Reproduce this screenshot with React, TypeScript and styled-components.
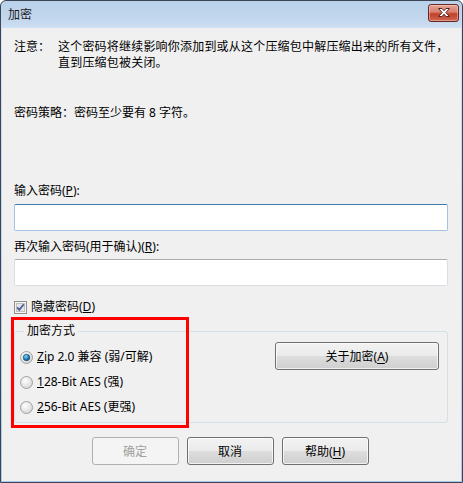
import styled, { createGlobalStyle } from 'styled-components';

const GlobalStyle = createGlobalStyle`
    html, body {
        margin: 0;
        padding: 0;
        background: #ffffff;
    }
    body {
        font-family: 'Noto Sans', 'Noto Sans CJK SC', sans-serif;
        font-size: 12px;
        color: #000;
    }
`;

const Window = styled.div`
    width: 463px;
    height: 483px;
    box-sizing: border-box;
    border: 1px solid #3b4553;
    border-radius: 6px 6px 0 0;
    background: linear-gradient(#b9d1ea 0px, #c4d8ee 20px, #cfe0f3 27px, #aac8e8 100%);
    display: flex;
    flex-direction: column;
    overflow: hidden;
`;

const TitleBar = styled.div`
    height: 27px;
    display: flex;
    align-items: center;
    justify-content: space-between;
    padding: 0 3px 0 7px;
    flex-shrink: 0;
`;

const Title = styled.span`
    font-size: 12px;
    color: #1a1a1a;
    line-height: 16px;
`;

const CloseButton = styled.div`
    width: 29px;
    height: 16px;
    margin-top: -4px;
    border: 1px solid #6b2420;
    border-radius: 3px;
    background: linear-gradient(#e6a394 0%, #d67f6f 45%, #c2402b 55%, #d0674f 100%);
    box-shadow: inset 0 0 0 1px rgba(255, 255, 255, 0.35);
    display: flex;
    align-items: center;
    justify-content: center;
`;

const Client = styled.div`
    flex: 1;
    margin: 0 1px 1px 1px;
    background: #f0f0f0;
    padding: 11px 12px 0 12px;
    display: flex;
    flex-direction: column;
`;

const NoteRow = styled.div`
    display: flex;
    line-height: 16px;

    > .head {
        width: 44px;
        flex-shrink: 0;
    }

    > .body {
        letter-spacing: 0.2px;
        white-space: nowrap;
    }
`;

const Policy = styled.div`
    line-height: 16px;
    margin-top: 34px;
`;

const Label = styled.div<{ $gap: number }>`
    line-height: 16px;
    margin-top: ${(p) => p.$gap}px;
`;

const TextBox = styled.input<{ $focused?: boolean }>`
    display: block;
    box-sizing: border-box;
    width: 434px;
    height: 27px;
    margin-top: ${(p) => (p.$focused ? 5 : 4)}px;
    border: 1px solid ${(p) => (p.$focused ? '#a4c3e0' : '#dadee3')};
    border-top-color: ${(p) => (p.$focused ? '#3d7bad' : '#abadb3')};
    border-radius: 2px;
    background: #fff;
    outline: none;
    padding: 0 4px;
`;

const CheckRow = styled.label`
    display: flex;
    align-items: center;
    gap: 4px;
    margin-top: 13px;
    line-height: 16px;
`;

const Group = styled.fieldset`
    position: relative;
    margin: 8px 1px 0 0;
    padding: 10px 8px 7px 5px;
    border: 1px solid #d5dfe5;
    border-radius: 3px;
    display: flex;
    justify-content: space-between;
    align-items: flex-start;

    > legend {
        padding: 0 3px;
        margin-left: 4px;
        line-height: 16px;
        color: #000;
    }
`;

const Annotation = styled.div`
    position: absolute;
    left: -4px;
    top: -22px;
    width: 172px;
    height: 105px;
    border: 3px solid #ff0000;
    pointer-events: none;
`;

const RadioList = styled.div`
    display: flex;
    flex-direction: column;
    gap: 9px;
`;

const RadioRow = styled.div`
    display: flex;
    align-items: center;
    gap: 4px;
    line-height: 16px;
`;

const Button = styled.button<{ $width: number; $disabled?: boolean }>`
    box-sizing: border-box;
    width: ${(p) => p.$width}px;
    height: 28px;
    padding: 0;
    font-family: inherit;
    font-size: 12px;
    border-radius: 3px;
    border: 1px solid ${(p) => (p.$disabled ? '#adb2b5' : '#707070')};
    color: ${(p) => (p.$disabled ? '#a0a0a0' : '#000')};
    background: ${(p) =>
        p.$disabled
            ? '#f4f4f4'
            : 'linear-gradient(#f2f2f2 0%, #ebebeb 48%, #dddddd 52%, #cfcfcf 100%)'};
    box-shadow: inset 0 0 0 1px ${(p) => (p.$disabled ? '#f4f4f4' : 'rgba(255,255,255,0.7)')};

    u {
        text-underline-offset: 2px;
    }
`;

const AboutArea = styled.div`
    margin-top: -7px;
`;

const ButtonRow = styled.div`
    display: flex;
    justify-content: center;
    gap: 8px;
    margin-top: 14px;
    margin-left: -3px;
`;

const CheckBoxIcon = () => (
    <svg width="13" height="13" viewBox="0 0 13 13">
        <rect x="0.5" y="0.5" width="12" height="12" fill="#f4f4f4" stroke="#8e8f8f" />
        <rect x="2.5" y="2.5" width="8" height="8" fill="#e4e4e4" stroke="#c0c0c0" />
        <path d="M3.2 6.4 L5.3 8.8 L9.8 3.2" fill="none" stroke="#4a5f97" strokeWidth="1.8" />
    </svg>
);

const RadioIcon = ({ checked }: { checked?: boolean }) => (
    <svg width="13" height="13" viewBox="0 0 13 13">
        <defs>
            <radialGradient id="rbg" cx="0.4" cy="0.35" r="0.7">
                <stop offset="0" stopColor="#ffffff" />
                <stop offset="1" stopColor="#d4d4d4" />
            </radialGradient>
            <radialGradient id="rdot" cx="0.4" cy="0.35" r="0.7">
                <stop offset="0" stopColor="#8ad8f8" />
                <stop offset="0.6" stopColor="#1c7fba" />
                <stop offset="1" stopColor="#0c3d63" />
            </radialGradient>
        </defs>
        <circle cx="6.5" cy="6.5" r="6" fill="url(#rbg)" stroke="#a0a0a0" />
        {checked && <circle cx="6.5" cy="6.5" r="3.3" fill="url(#rdot)" stroke="#1b4a6e" strokeWidth="0.6" />}
    </svg>
);

const CloseIcon = () => (
    <svg width="14" height="11" viewBox="0 0 14 11">
        <path
            d="M1.5 1.5 L5 1.5 L7 3.8 L9 1.5 L12.5 1.5 L8.8 5.5 L12.5 9.5 L9 9.5 L7 7.2 L5 9.5 L1.5 9.5 L5.2 5.5 Z"
            fill="#ffffff"
            stroke="#5a2a24"
            strokeWidth="1"
            strokeLinejoin="round"
        />
    </svg>
);

export default function App() {
    return (
        <>
            <GlobalStyle />
            <Window>
                <TitleBar>
                    <Title>加密</Title>
                    <CloseButton>
                        <CloseIcon />
                    </CloseButton>
                </TitleBar>
                <Client>
                    <NoteRow>
                        <span className="head">注意：</span>
                        <span className="body">
                            这个密码将继续影响你添加到或从这个压缩包中解压缩出来的所有文件，
                            <br />
                            直到压缩包被关闭。
                        </span>
                    </NoteRow>
                    <Policy>密码策略：密码至少要有 8 字符。</Policy>
                    <Label $gap={62}>
                        输入密码(<u>P</u>):
                    </Label>
                    <TextBox type="password" $focused />
                    <Label $gap={8}>
                        再次输入密码(用于确认)(<u>R</u>):
                    </Label>
                    <TextBox type="password" />
                    <CheckRow>
                        <CheckBoxIcon />
                        <span>
                            隐藏密码(<u>D</u>)
                        </span>
                    </CheckRow>
                    <Group>
                        <legend>加密方式</legend>
                        <Annotation />
                        <RadioList>
                            <RadioRow>
                                <RadioIcon checked />
                                <span>
                                    <u>Z</u>ip 2.0 兼容 (弱/可解)
                                </span>
                            </RadioRow>
                            <RadioRow>
                                <RadioIcon />
                                <span>
                                    <u>1</u>28-Bit AES (强)
                                </span>
                            </RadioRow>
                            <RadioRow>
                                <RadioIcon />
                                <span>
                                    <u>2</u>56-Bit AES (更强)
                                </span>
                            </RadioRow>
                        </RadioList>
                        <AboutArea>
                            <Button $width={164}>
                                关于加密(<u>A</u>)
                            </Button>
                        </AboutArea>
                    </Group>
                    <ButtonRow>
                        <Button $width={87} $disabled>
                            确定
                        </Button>
                        <Button $width={87}>取消</Button>
                        <Button $width={87}>
                            帮助(<u>H</u>)
                        </Button>
                    </ButtonRow>
                </Client>
            </Window>
        </>
    );
}
